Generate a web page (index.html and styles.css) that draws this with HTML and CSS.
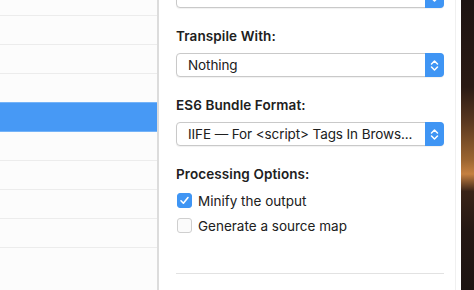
FILE: index.html
```html
<!DOCTYPE html>
<html lang="en">
<head>
  <meta charset="UTF-8" />
  <meta name="viewport" content="width=device-width, initial-scale=1" />
  <title>Bundle Options</title>
  <link rel="stylesheet" href="styles.css">
</head>
<body>
  <div class="window">
    <ul class="list">
      <li class="row"></li>
      <li class="row"></li>
      <li class="row"></li>
      <li class="row"></li>
      <li class="row selected"></li>
      <li class="row"></li>
      <li class="row"></li>
      <li class="row"></li>
      <li class="row"></li>
      <li class="row"></li>
    </ul>

    <div class="panel">
      <div class="select first">
        <span class="select-label"></span>
        <span class="select-arrows"><svg width="9" height="13" viewBox="0 0 9 13"><path d="M1.5 5 L4.5 2 L7.5 5 M1.5 8 L4.5 11 L7.5 8" fill="none" stroke="#fff" stroke-width="1.5" stroke-linecap="round" stroke-linejoin="round"/></svg></span>
      </div>

      <div class="field-title">Transpile With:</div>
      <div class="select">
        <span class="select-label">Nothing</span>
        <span class="select-arrows"><svg width="9" height="13" viewBox="0 0 9 13"><path d="M1.5 5 L4.5 2 L7.5 5 M1.5 8 L4.5 11 L7.5 8" fill="none" stroke="#fff" stroke-width="1.5" stroke-linecap="round" stroke-linejoin="round"/></svg></span>
      </div>

      <div class="field-title">ES6 Bundle Format:</div>
      <div class="select">
        <span class="select-label">IIFE — For &lt;script&gt; Tags In Brows...</span>
        <span class="select-arrows"><svg width="9" height="13" viewBox="0 0 9 13"><path d="M1.5 5 L4.5 2 L7.5 5 M1.5 8 L4.5 11 L7.5 8" fill="none" stroke="#fff" stroke-width="1.5" stroke-linecap="round" stroke-linejoin="round"/></svg></span>
      </div>

      <div class="field-title options">Processing Options:</div>
      <label class="check">
        <span class="box checked"><svg width="11" height="11" viewBox="0 0 11 11"><path d="M2 5.8 L4.4 8.2 L9 2.6" fill="none" stroke="#fff" stroke-width="1.6" stroke-linecap="round" stroke-linejoin="round"/></svg></span>
        Minify the output
      </label>
      <label class="check">
        <span class="box"></span>
        Generate a source map
      </label>

      <div class="divider"></div>
    </div>
  </div>

  <div class="desktop"></div>
</body>
</html>
```

FILE: styles.css
```css
body {
  margin: 0;
  height: 290px;
  overflow: hidden;
  display: flex;
  font-family: Inter, "Open Sans", sans-serif;
  color: #202020;
  background: #fff;
}

.window {
  flex: 1;
  display: flex;
  background: #fff;
}

.list {
  list-style: none;
  margin: -14px 0 0;
  padding: 0;
  width: 157px;
  background: #fcfcfc;
  border-right: 2px solid #dcdcdc;
}

.row {
  height: 28px;
  border-top: 1px solid #ececec;
}

.row:first-child {
  border-top: none;
  height: 29px;
}

.row.selected {
  position: relative;
  background: #4799f5;
  border-top-color: #74b3f8;
  box-shadow: 0 1px 0 #74b3f8;
}

.panel {
  flex: 1;
  padding: 0 11px 0 17px;
  border-right: 1px solid #f0f0f0;
  margin-right: 5px;
}

.field-title {
  font-size: 13.5px;
  font-weight: 600;
  margin: 20px 0 9px;
  letter-spacing: 0.1px;
}

.field-title.options {
  margin-bottom: 6px;
}

.select {
  display: flex;
  height: 22px;
  border: 1px solid #c9c9c9;
  border-radius: 4px;
  background: #fff;
  box-shadow: 0 1px 1px rgba(0, 0, 0, 0.06);
}

.select.first {
  margin-top: -16px;
}

.select-label {
  flex: 1;
  font-size: 13.5px;
  line-height: 22px;
  padding-left: 11px;
  letter-spacing: -0.1px;
  white-space: nowrap;
  overflow: hidden;
}

.select-arrows {
  width: 19px;
  margin: -1px -1px -1px 0;
  background: #3f95f4;
  border-radius: 0 4px 4px 0;
  display: flex;
  align-items: center;
  justify-content: center;
}

.check {
  display: flex;
  align-items: center;
  gap: 6px;
  font-size: 13.5px;
  height: 25px;
  margin-left: 1px;
}

.box {
  width: 13px;
  height: 13px;
  border: 1px solid #cfcfcf;
  border-radius: 3px;
  background: #fbfbfb;
  display: flex;
  align-items: center;
  justify-content: center;
}

.box.checked {
  background: #3f95f4;
  border-color: #3f95f4;
}

.divider {
  margin-top: 35px;
  height: 1px;
  background: #e2e2e2;
}

.desktop {
  width: 13px;
  background: linear-gradient(to bottom, #1d1412 0%, #2a1a14 30%, #5a3820 42%, #9a6430 55%, #c58040 60%, #3a2418 66%, #241814 80%, #1c1412 100%);
}
```
